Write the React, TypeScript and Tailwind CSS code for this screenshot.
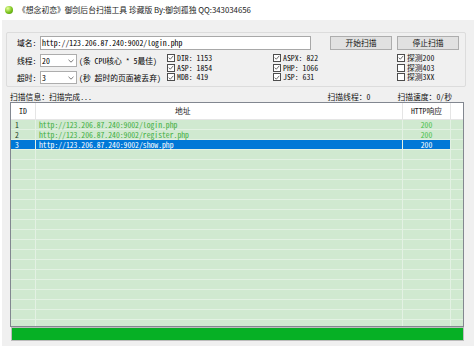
import React from "react";

const mono = "font-['Noto_Sans_Mono_CJK_SC','Noto_Sans_CJK_SC',monospace]";

const rows = [
  { id: "1", url: "http://123.206.87.240:9002/login.php", code: "200" },
  { id: "2", url: "http://123.206.87.240:9002/register.php", code: "200" },
  { id: "3", url: "http://123.206.87.240:9002/show.php", code: "200" },
];

function Check({ checked, label }: { checked?: boolean; label: string }) {
  return (
    <div className="flex h-[9.75px] items-center gap-[2px]">
      <span className="flex h-[8px] w-[8px] items-center justify-center border border-[#4d4d4d] bg-white">
        {checked && (
          <svg width="7" height="7" viewBox="0 0 8 8">
            <path d="M1 4.2 L3.1 6.3 L7 1.8" fill="none" stroke="#222" strokeWidth="0.9" />
          </svg>
        )}
      </span>
      <span className="text-[7.8px] leading-none text-[#111]">{label}</span>
    </div>
  );
}

function Combo({ value }: { value: string }) {
  return (
    <div className="flex h-[13px] w-[37px] items-center justify-between border border-[#adadad] bg-white pl-[1px] pr-[2px]">
      <span className="text-[7.8px] leading-none">{value}</span>
      <svg width="6" height="4" viewBox="0 0 6 4">
        <path d="M0.5 0.8 L3 3.2 L5.5 0.8" fill="none" stroke="#555" strokeWidth="0.8" />
      </svg>
    </div>
  );
}

function Btn({ label }: { label: string }) {
  return (
    <div className="flex h-[14px] w-[62px] items-center justify-center border border-[#adadad] bg-[#e1e1e1] text-[7.8px] leading-none text-[#111]">
      {label}
    </div>
  );
}

export default function App() {
  return (
    <div className={`h-[349px] w-[474px] overflow-hidden bg-white ${mono}`}>
      <div className="flex h-[20px] items-center pl-[5px]">
        <span className="h-[8px] w-[8px] rounded-full bg-[radial-gradient(circle_at_35%_30%,#e6ff9a,#7cc21e_55%,#3f8f0a)]" />
        <span className="ml-[5px] font-['Noto_Sans_CJK_SC',sans-serif] text-[7.8px] leading-none text-[#222]">
          《想念初恋》御剑后台扫描工具 珍藏版 By:御剑孤独 QQ:343034656
        </span>
      </div>

      <div className="ml-[2px] h-[326px] bg-[#f0f0f0] pt-[12px]">
        {/* 参数区 */}
        <div className="ml-[4px] h-[55px] w-[460px] rounded-[2px] border border-[#dcdcdc] pt-[3px]">
          <div className="flex h-[14px] items-center">
            <span className="ml-[10px] w-[23px] text-[7.8px] leading-none">域名:</span>
            <div className="flex h-[14px] w-[271px] items-center border border-[#a8a8a8] bg-white pl-[1px] text-[7.8px] leading-none">
              http://123.206.87.240:9002/login.php
            </div>
            <div className="ml-[19px]">
              <Btn label="开始扫描" />
            </div>
            <div className="ml-[5px]">
              <Btn label="停止扫描" />
            </div>
          </div>

          <div className="mt-[3px] flex">
            <div className="flex w-[160px] flex-col gap-[4px] pt-[1px]">
              <div className="flex items-center">
                <span className="ml-[10px] w-[23px] text-[7.8px] leading-none">线程:</span>
                <Combo value="20" />
                <span className="ml-[2px] text-[7.8px] leading-none">(条 CPU核心 * 5最佳)</span>
              </div>
              <div className="flex items-center">
                <span className="ml-[10px] w-[23px] text-[7.8px] leading-none">超时:</span>
                <Combo value="3" />
                <span className="ml-[2px] text-[7.8px] leading-none">(秒 超时的页面被丢弃)</span>
              </div>
            </div>
            <div className="flex w-[106px] flex-col">
              <Check checked label="DIR: 1153" />
              <Check checked label="ASP: 1854" />
              <Check checked label="MDB: 419" />
            </div>
            <div className="flex w-[124px] flex-col">
              <Check checked label="ASPX: 822" />
              <Check checked label="PHP: 1066" />
              <Check checked label="JSP: 631" />
            </div>
            <div className="flex flex-col">
              <Check checked label="探测200" />
              <Check label="探测403" />
              <Check label="探测3XX" />
            </div>
          </div>
        </div>

        {/* 状态 */}
        <div className="mt-[4px] flex h-[11px] items-center text-[7.8px] leading-none text-[#111]">
          <span className="ml-[8px]">扫描信息：扫描完成...</span>
          <span className="ml-auto">扫描线程：0</span>
          <span className="ml-[27px] mr-[22px]">扫描速度：0/秒</span>
        </div>

        {/* 结果列表 */}
        <div className="ml-[8px] flex h-[225px] w-[454px] flex-col overflow-hidden border border-[#828790] bg-[#d0e9d0]">
          <div className="flex h-[17px] shrink-0 border-b border-[#e5e5e5] bg-white text-[7.8px] leading-none text-[#222]">
            <div className="flex w-[25px] items-center justify-center border-r border-[#e5e5e5]">ID</div>
            <div className="flex w-[367px] items-center border-r border-[#e5e5e5] pl-[139px]">地址</div>
            <div className="flex w-[48px] items-center justify-center border-r border-[#e5e5e5]">HTTP响应</div>
            <div className="flex-1" />
          </div>
          {Array.from({ length: 21 }).map((_, i) => {
            const r = rows[i];
            const sel = i === 2;
            return (
              <div key={i} className="flex h-[10px] shrink-0 border-b border-[#e3f1e3] text-[7.7px] leading-none">
                <div className={`flex w-[25px] items-center border-r border-[#e3f1e3] pl-[4px] ${sel ? "bg-[#0078d7] text-white" : "text-[#1d3d1d]"}`}>
                  {r?.id}
                </div>
                <div className={`flex w-[367px] items-center border-r border-[#e3f1e3] pl-[3px] ${sel ? "bg-[#0078d7] text-white" : "text-[#3fae3f]"}`}>
                  {r?.url}
                </div>
                <div className={`flex w-[48px] items-center justify-center border-r border-[#e3f1e3] ${sel ? "bg-[#0078d7] text-white" : "text-[#49c049]"}`}>
                  {r?.code}
                </div>
                <div className="flex-1" />
              </div>
            );
          })}
        </div>

        {/* 进度 */}
        <div className="ml-[9px] h-[14px] w-[453px] border border-[#bcbcbc] bg-[#06b025]" />
      </div>
    </div>
  );
}
